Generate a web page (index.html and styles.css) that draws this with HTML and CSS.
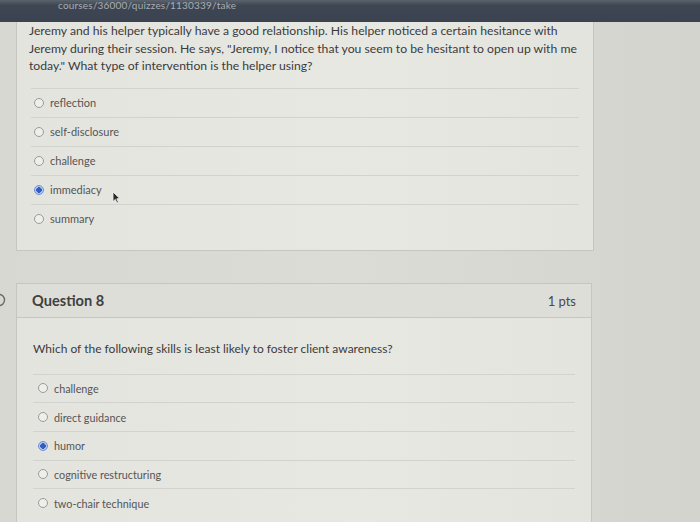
FILE: index.html
```html
<!DOCTYPE html>
<html lang="en">
  <head>
    <meta charset="UTF-8" />
    <meta name="viewport" content="width=device-width, initial-scale=1.0" />
    <title>Quiz: Take</title>

    <link rel="stylesheet" href="styles.css">
  </head>
  <body>
    <div class="topbar">
      <span class="url">courses/36000/quizzes/1130339/take</span>
    </div>

    <div class="page">
      <div class="gutter"></div>
      <div class="column">
        <div class="card card-first">
          <div class="question-text first">
            Jeremy and his helper typically have a good relationship. His helper noticed a certain hesitance with<br />
            Jeremy during their session. He says, "Jeremy, I notice that you seem to be hesitant to open up with me<br />
            today." What type of intervention is the helper using?
          </div>
          <div class="answers">
            <label class="answer"><span class="radio"></span>reflection</label>
            <label class="answer"><span class="radio"></span>self-disclosure</label>
            <label class="answer"><span class="radio"></span>challenge</label>
            <label class="answer">
              <span class="radio checked"></span>immediacy
              <svg class="cursor" width="9" height="13" viewBox="0 0 9 13">
                <path d="M1 1 L1 10.5 L3.3 8.4 L5 12 L6.4 11.3 L4.8 7.8 L7.8 7.6 Z" fill="#2a2a2a" stroke="#f2f2f2" stroke-width="0.8" />
              </svg>
            </label>
            <label class="answer"><span class="radio"></span>summary</label>
          </div>
        </div>

        <div class="question-row">
          <div class="flag">
            <svg width="14" height="14" viewBox="0 0 14 14">
              <circle cx="7" cy="7" r="5.5" fill="none" stroke="#6b6b6b" stroke-width="1.4" />
            </svg>
          </div>
          <div class="card card-second">
            <div class="header">
              <span class="title">Question 8</span>
              <span class="points">1 pts</span>
            </div>
            <div class="question-text second">
              Which of the following skills is least likely to foster client awareness?
            </div>
            <div class="answers">
              <label class="answer"><span class="radio"></span>challenge</label>
              <label class="answer"><span class="radio"></span>direct guidance</label>
              <label class="answer"><span class="radio checked"></span>humor</label>
              <label class="answer"><span class="radio"></span>cognitive restructuring</label>
              <label class="answer"><span class="radio"></span>two-chair technique</label>
            </div>
          </div>
        </div>
      </div>
    </div>

    <div class="bezel"></div>
  </body>
</html>
```

FILE: styles.css
```css
body {
  margin: 0;
  height: 522px;
  overflow: hidden;
  background: linear-gradient(90deg, #d8d8d2 0%, #dcdcd6 50%, #d4d4ce 100%);
  font-family: Lato, "Open Sans", sans-serif;
  color: #3a3a3a;
  display: flex;
  flex-direction: column;
}

.topbar {
  height: 22px;
  flex-shrink: 0;
  background: linear-gradient(180deg, #5a626d 0%, #3e4653 25%, #3b4350 100%);
  display: flex;
  align-items: flex-start;
  padding-left: 58px;
}

.url {
  font-size: 10px;
  line-height: 10px;
  color: #a9adb3;
  letter-spacing: 0.2px;
}

.page {
  display: flex;
  flex: 1;
}

.gutter {
  width: 16px;
  flex-shrink: 0;
}

.column {
  display: flex;
  flex-direction: column;
  width: 578px;
}

.card {
  background: linear-gradient(90deg, #e4e4df 0%, #e8e8e3 60%, #e4e4df 100%);
  border: 1px solid #c6c6c0;
}

.card-first {
  border-top: none;
  height: 228px;
  box-sizing: content-box;
}

.question-text {
  font-size: 12.2px;
  line-height: 17.5px;
  color: #3b3b3b;
  white-space: nowrap;
}

.question-text.first {
  padding: 0 12px;
}

.answers {
  display: flex;
  flex-direction: column;
  margin: 13px 14px 0 14px;
}

.answer {
  position: relative;
  display: flex;
  align-items: center;
  gap: 6px;
  height: 28px;
  padding-left: 3px;
  border-top: 1px solid #d3d3cd;
  font-size: 11px;
  color: #555555;
}

.radio {
  width: 8px;
  height: 8px;
  border-radius: 50%;
  border: 1px solid #9a9a9a;
  background: #eeeeea;
}

.radio.checked {
  border-color: #6f8fcf;
  background: radial-gradient(circle, #2f5fbf 0 2.6px, #b9caf0 3px);
}

.cursor {
  position: absolute;
  left: 81px;
  top: 15px;
}

.question-row {
  display: flex;
  margin-top: 32px;
  margin-left: -16px;
}

.flag {
  width: 16px;
  flex-shrink: 0;
  overflow: hidden;
  padding-top: 8px;
}

.flag svg {
  margin-left: -8px;
}

.card-second {
  width: 574px;
  height: 260px;
  border-bottom: none;
}

.header {
  height: 33px;
  display: flex;
  justify-content: space-between;
  align-items: center;
  padding: 0 15px;
  background: #deded9;
  border-bottom: 1px solid #c6c6c0;
}

.title {
  font-size: 14.6px;
  font-weight: bold;
  color: #404040;
}

.points {
  font-size: 13px;
  color: #4a4a4a;
}

.question-text.second {
  padding: 22px 16px 0 16px;
  font-size: 12px;
}

.card-second .answers {
  margin: 16px 16px 0 16px;
}

.card-second .answer {
  height: 27.7px;
  padding-left: 5px;
  font-size: 10.8px;
}

.bezel {
  height: 3px;
  flex-shrink: 0;
  background: #5a5a58;
}
```
